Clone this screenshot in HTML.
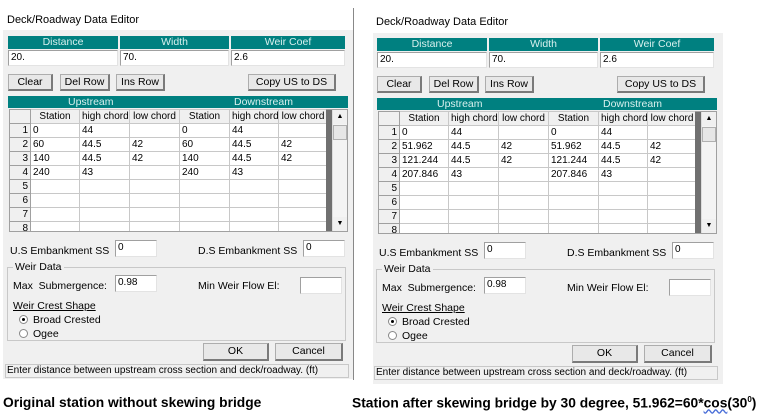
<!DOCTYPE html>
<html><head><meta charset="utf-8">
<style>
*{margin:0;padding:0;box-sizing:border-box}
body{width:768px;height:419px;background:#fff;position:relative;overflow:hidden;font-family:"Liberation Sans",sans-serif;font-size:10.5px;color:#000}
.p{position:absolute;width:360px;height:380px}
.a{position:absolute}
.gray{background:#f0f0f0}
.teal{background:#008080;color:#d8f0ee;text-align:center;font-size:10.5px;line-height:12px}
.in{background:#fff;border:1px solid #a0a0a0;border-right-color:#e3e3e3;border-bottom-color:#e3e3e3;padding-left:2px;line-height:14px;font-size:10px}
.btn{background:#e8e8e8;border:1px solid #adadad;border-right:2px solid #7a7a7a;border-bottom:2px solid #7a7a7a;text-align:center;line-height:14px}
.clip{position:absolute;overflow:hidden;background:#fff}
.grid{border-collapse:collapse;table-layout:fixed;background:#fff}
.grid td{border:1px solid #c8c8c8;height:14px;padding:0 2px;font-size:10px;line-height:12px;white-space:nowrap;overflow:hidden}
.grid tr:first-child td{text-align:center;background:#f0f0f0}
.grid td.rh{background:#f0f0f0;text-align:right;padding-right:2px;border-color:#a0a0a0}
.cap{position:absolute;font-weight:bold;font-size:13.8px;white-space:nowrap}
.radio{display:inline-block;width:9px;height:9px;border-radius:50%;border:1px solid #888;background:#fff;vertical-align:-1px;margin-right:5px;position:relative}
.radio.on::after{content:"";position:absolute;left:2px;top:2px;width:3px;height:3px;border-radius:50%;background:#000}
</style></head><body>

<!-- LEFT PANEL -->
<div class="p" style="left:0;top:0">
  <div class="a" style="left:7px;top:14px;font-size:11px">Deck/Roadway Data Editor</div>
  <div class="a gray" style="left:3px;top:30px;width:351px;height:349px"></div>
  <div class="a" style="left:353px;top:8px;width:1px;height:372px;background:#888"></div>
  <div class="a teal" style="left:8px;top:36px;width:110px;height:13px">Distance</div>
  <div class="a teal" style="left:120px;top:36px;width:109px;height:13px">Width</div>
  <div class="a teal" style="left:231px;top:36px;width:114px;height:13px">Weir Coef</div>
  <div class="a in" style="left:8px;top:50px;width:110px;height:16px">20.</div>
  <div class="a in" style="left:120px;top:50px;width:109px;height:16px">70.</div>
  <div class="a in" style="left:231px;top:50px;width:114px;height:16px">2.6</div>
  <div class="a btn" style="left:8px;top:74px;width:45px;height:17px">Clear</div>
  <div class="a btn" style="left:60px;top:74px;width:50px;height:17px">Del Row</div>
  <div class="a btn" style="left:116px;top:74px;width:49px;height:17px">Ins Row</div>
  <div class="a btn" style="left:248px;top:74px;width:88px;height:17px">Copy US to DS</div>
  <div class="a teal" style="left:8px;top:96px;width:340px;height:12px"><span style="position:absolute;left:60px">Upstream</span><span style="position:absolute;left:226px">Downstream</span></div>
  <div class="a" style="left:9px;top:109px;width:339px;height:123px;background:#fff;border:1px solid #a0a0a0"></div>
  <div class="clip" style="left:9px;top:109px;width:317px;height:122px">
  <table class="grid" style="width:318px">
    <colgroup><col style="width:21px"><col style="width:49px"><col style="width:50px"><col style="width:50px"><col style="width:50px"><col style="width:49px"><col style="width:49px"></colgroup>
    <tr><td class="rh"></td><td>Station</td><td>high chord</td><td>low chord</td><td>Station</td><td>high chord</td><td>low chord</td></tr>
    <tr><td class="rh">1</td><td>0</td><td>44</td><td></td><td>0</td><td>44</td><td></td></tr>
    <tr><td class="rh">2</td><td>60</td><td>44.5</td><td>42</td><td>60</td><td>44.5</td><td>42</td></tr>
    <tr><td class="rh">3</td><td>140</td><td>44.5</td><td>42</td><td>140</td><td>44.5</td><td>42</td></tr>
    <tr><td class="rh">4</td><td>240</td><td>43</td><td></td><td>240</td><td>43</td><td></td></tr>
    <tr><td class="rh">5</td><td></td><td></td><td></td><td></td><td></td><td></td></tr>
    <tr><td class="rh">6</td><td></td><td></td><td></td><td></td><td></td><td></td></tr>
    <tr><td class="rh">7</td><td></td><td></td><td></td><td></td><td></td><td></td></tr>
    <tr><td class="rh">8</td><td></td><td></td><td></td><td></td><td></td><td></td></tr>
  </table></div>
  <div class="a" style="left:326px;top:110px;width:6px;height:121px;background:#707070"></div>
  <div class="a" style="left:332px;top:110px;width:15px;height:121px;background:#f4f4f4;border-left:1px solid #ddd"></div>
  <div class="a" style="left:333px;top:110px;width:14px;height:14px;font-size:7px;text-align:center;line-height:14px;background:#f0f0f0">▲</div>
  <div class="a" style="left:333px;top:125px;width:14px;height:15px;background:#e6e6e6;border:1px solid #b0b0b0"></div>
  <div class="a" style="left:333px;top:217px;width:14px;height:14px;font-size:7px;text-align:center;line-height:14px;background:#f0f0f0">▼</div>
  <div class="a" style="left:10px;top:245px">U.S Embankment SS</div>
  <div class="a in" style="left:115px;top:240px;width:42px;height:17px">0</div>
  <div class="a" style="left:198px;top:245px">D.S Embankment SS</div>
  <div class="a in" style="left:303px;top:240px;width:42px;height:17px">0</div>
  <div class="a" style="left:7px;top:267px;width:339px;height:74px;border:1px solid #c8c8c8"></div>
  <div class="a gray" style="left:13px;top:261px;padding:0 2px">Weir Data</div>
  <div class="a" style="left:13px;top:280px">Max&nbsp; Submergence:</div>
  <div class="a in" style="left:115px;top:275px;width:42px;height:17px">0.98</div>
  <div class="a" style="left:198px;top:280px">Min Weir Flow El:</div>
  <div class="a in" style="left:300px;top:277px;width:42px;height:17px"></div>
  <div class="a" style="left:13px;top:300px;text-decoration:underline">Weir Crest Shape</div>
  <div class="a" style="left:19px;top:314px"><span class="radio on"></span>Broad Crested</div>
  <div class="a" style="left:19px;top:328px"><span class="radio"></span>Ogee</div>
  <div class="a btn" style="left:203px;top:343px;width:66px;height:18px">OK</div>
  <div class="a btn" style="left:275px;top:343px;width:68px;height:18px">Cancel</div>
  <div class="a" style="left:5px;top:364px;width:344px;height:14px;border:1px solid #c8c8c8;line-height:12px;font-size:10px;padding-left:1px">Enter distance between upstream cross section and deck/roadway. (ft)</div>
</div>

<!-- RIGHT PANEL -->
<div class="p" style="left:369px;top:2px">
  <div class="a" style="left:7px;top:14px;font-size:11px">Deck/Roadway Data Editor</div>
  <div class="a gray" style="left:4px;top:31px;width:350px;height:351px"></div>
  <div class="a teal" style="left:8px;top:36px;width:110px;height:13px">Distance</div>
  <div class="a teal" style="left:120px;top:36px;width:109px;height:13px">Width</div>
  <div class="a teal" style="left:231px;top:36px;width:114px;height:13px">Weir Coef</div>
  <div class="a in" style="left:8px;top:50px;width:110px;height:16px">20.</div>
  <div class="a in" style="left:120px;top:50px;width:109px;height:16px">70.</div>
  <div class="a in" style="left:231px;top:50px;width:114px;height:16px">2.6</div>
  <div class="a btn" style="left:8px;top:74px;width:45px;height:17px">Clear</div>
  <div class="a btn" style="left:60px;top:74px;width:50px;height:17px">Del Row</div>
  <div class="a btn" style="left:116px;top:74px;width:49px;height:17px">Ins Row</div>
  <div class="a btn" style="left:248px;top:74px;width:88px;height:17px">Copy US to DS</div>
  <div class="a teal" style="left:8px;top:96px;width:340px;height:12px"><span style="position:absolute;left:60px">Upstream</span><span style="position:absolute;left:226px">Downstream</span></div>
  <div class="a" style="left:9px;top:109px;width:339px;height:123px;background:#fff;border:1px solid #a0a0a0"></div>
  <div class="clip" style="left:9px;top:109px;width:317px;height:122px">
  <table class="grid" style="width:318px">
    <colgroup><col style="width:21px"><col style="width:49px"><col style="width:50px"><col style="width:50px"><col style="width:50px"><col style="width:49px"><col style="width:49px"></colgroup>
    <tr><td class="rh"></td><td>Station</td><td>high chord</td><td>low chord</td><td>Station</td><td>high chord</td><td>low chord</td></tr>
    <tr><td class="rh">1</td><td>0</td><td>44</td><td></td><td>0</td><td>44</td><td></td></tr>
    <tr><td class="rh">2</td><td>51.962</td><td>44.5</td><td>42</td><td>51.962</td><td>44.5</td><td>42</td></tr>
    <tr><td class="rh">3</td><td>121.244</td><td>44.5</td><td>42</td><td>121.244</td><td>44.5</td><td>42</td></tr>
    <tr><td class="rh">4</td><td>207.846</td><td>43</td><td></td><td>207.846</td><td>43</td><td></td></tr>
    <tr><td class="rh">5</td><td></td><td></td><td></td><td></td><td></td><td></td></tr>
    <tr><td class="rh">6</td><td></td><td></td><td></td><td></td><td></td><td></td></tr>
    <tr><td class="rh">7</td><td></td><td></td><td></td><td></td><td></td><td></td></tr>
    <tr><td class="rh">8</td><td></td><td></td><td></td><td></td><td></td><td></td></tr>
  </table></div>
  <div class="a" style="left:326px;top:110px;width:6px;height:121px;background:#707070"></div>
  <div class="a" style="left:332px;top:110px;width:15px;height:121px;background:#f4f4f4;border-left:1px solid #ddd"></div>
  <div class="a" style="left:333px;top:110px;width:14px;height:14px;font-size:7px;text-align:center;line-height:14px;background:#f0f0f0">▲</div>
  <div class="a" style="left:333px;top:125px;width:14px;height:15px;background:#e6e6e6;border:1px solid #b0b0b0"></div>
  <div class="a" style="left:333px;top:217px;width:14px;height:14px;font-size:7px;text-align:center;line-height:14px;background:#f0f0f0">▼</div>
  <div class="a" style="left:10px;top:245px">U.S Embankment SS</div>
  <div class="a in" style="left:115px;top:240px;width:42px;height:17px">0</div>
  <div class="a" style="left:198px;top:245px">D.S Embankment SS</div>
  <div class="a in" style="left:303px;top:240px;width:42px;height:17px">0</div>
  <div class="a" style="left:7px;top:267px;width:339px;height:74px;border:1px solid #c8c8c8"></div>
  <div class="a gray" style="left:13px;top:261px;padding:0 2px">Weir Data</div>
  <div class="a" style="left:13px;top:280px">Max&nbsp; Submergence:</div>
  <div class="a in" style="left:115px;top:275px;width:42px;height:17px">0.98</div>
  <div class="a" style="left:198px;top:280px">Min Weir Flow El:</div>
  <div class="a in" style="left:300px;top:277px;width:42px;height:17px"></div>
  <div class="a" style="left:13px;top:300px;text-decoration:underline">Weir Crest Shape</div>
  <div class="a" style="left:19px;top:314px"><span class="radio on"></span>Broad Crested</div>
  <div class="a" style="left:19px;top:328px"><span class="radio"></span>Ogee</div>
  <div class="a btn" style="left:203px;top:343px;width:66px;height:18px">OK</div>
  <div class="a btn" style="left:275px;top:343px;width:68px;height:18px">Cancel</div>
  <div class="a" style="left:5px;top:364px;width:344px;height:14px;border:1px solid #c8c8c8;line-height:12px;font-size:10px;padding-left:1px">Enter distance between upstream cross section and deck/roadway. (ft)</div>
</div>

<div class="cap" style="left:3px;top:395px">Original station without skewing bridge</div>
<div class="cap" style="left:352px;top:395px">Station after skewing bridge by 30 degree, 51.962=60*<span style="text-decoration:underline wavy #4a6fd8">cos</span>(30<sup style="font-size:8px">0</sup>)</div>
</body></html>
